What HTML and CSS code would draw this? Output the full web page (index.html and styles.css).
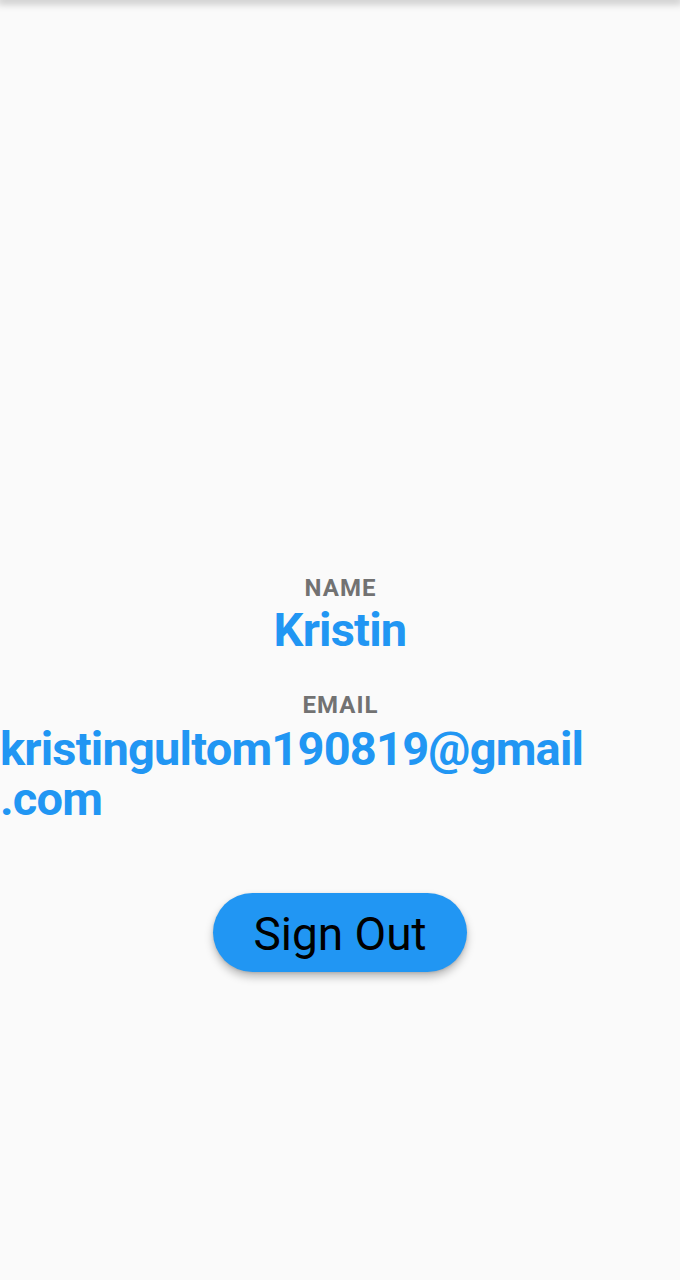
FILE: index.html
```html
<!DOCTYPE html>
<html lang="en">
<head>
<meta charset="utf-8">
<title>Profile</title>
<link rel="stylesheet" href="styles.css">
</head>
<body>
<div class="app-bar"></div>
<main class="profile">
  <div class="label">NAME</div>
  <div class="value value-name">Kristin</div>
  <div class="label label-email">EMAIL</div>
  <div class="value value-email">kristingultom190819@gmail<wbr>.com</div>
  <button class="sign-out" type="button">Sign Out</button>
</main>
</body>
</html>
```
FILE: styles.css
```css
html, body {
  margin: 0;
  padding: 0;
}

body {
  width: 680px;
  height: 1280px;
  overflow: hidden;
  background: #fafafa;
  font-family: Roboto, "Noto Sans", Arial, sans-serif;
}

/* app bar sits just above the visible area; only its shadow shows */
.app-bar {
  height: 0;
  box-shadow: 0 0 8px 3px rgba(0, 0, 0, 0.28);
}

.profile {
  display: flex;
  flex-direction: column;
  align-items: center;
  padding-top: 574px;
}

.label {
  font-size: 24px;
  line-height: 28px;
  font-weight: 700;
  color: #727272;
  letter-spacing: 1px;
  margin-right: -1px;
}

.label-email {
  margin-top: 34px;
}

.value {
  font-size: 47px;
  line-height: 55px;
  font-weight: 700;
  color: #2196f3;
  letter-spacing: -0.8px;
}

.value-name {
  margin-top: 0;
}

.value-email {
  align-self: stretch;
  text-align: left;
  line-height: 50px;
  margin-top: 5px;
}

.sign-out {
  margin-top: 69px;
  width: 254px;
  height: 79px;
  border: none;
  border-radius: 40px;
  background: #2196f3;
  color: #000;
  font-family: Roboto, "Noto Sans", Arial, sans-serif;
  font-size: 46px;
  font-weight: 400;
  padding: 3px 0 0;
  box-shadow: 0 5px 8px rgba(0, 0, 0, 0.25), 0 1px 3px rgba(0, 0, 0, 0.12);
}
```
